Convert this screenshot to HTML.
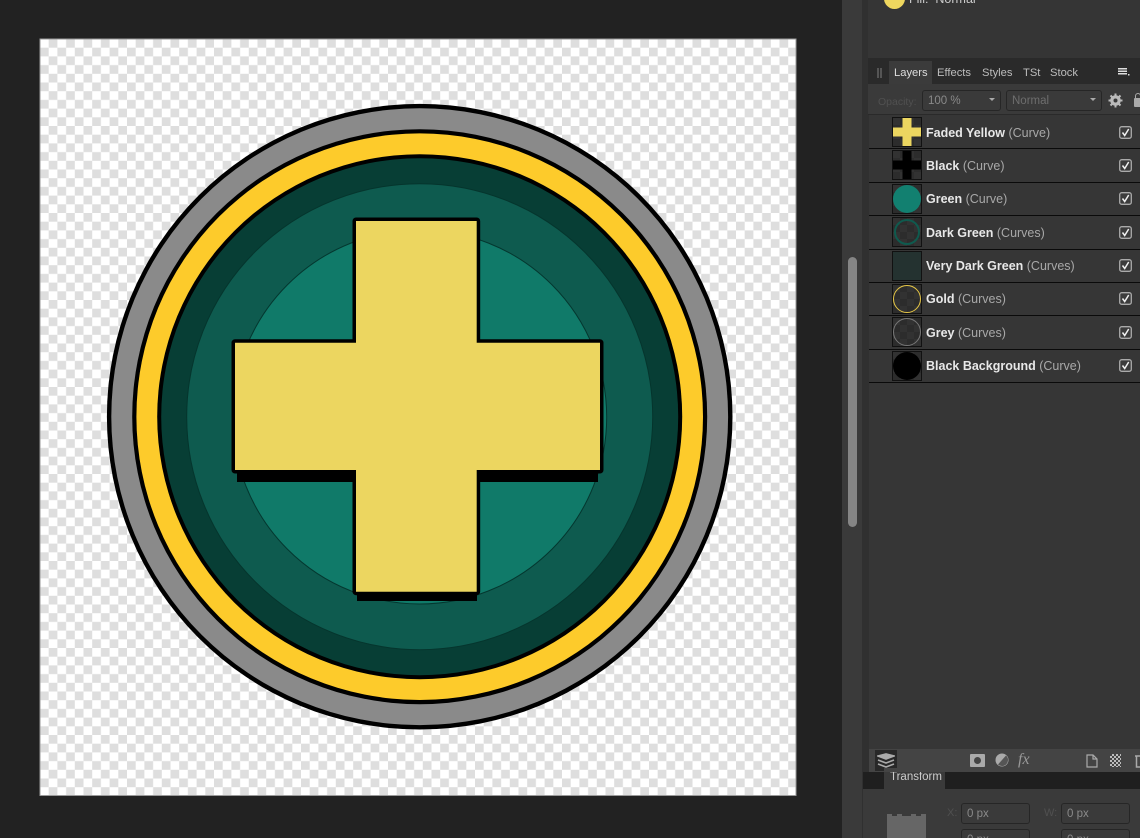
<!DOCTYPE html>
<html><head><meta charset="utf-8">
<style>
html,body{margin:0;padding:0;background:#222}
#r{position:relative;width:1140px;height:838px;overflow:hidden;background:#222;font-family:"Liberation Sans",sans-serif;color:#bbb;filter:blur(.35px)}
.a{position:absolute}
.row{position:absolute;left:869px;width:271px;border-bottom:1.5px solid #0a0a0a;background:#363636}
.th{position:absolute;left:23px;top:.5px;width:30px;height:30px;background:repeating-conic-gradient(#2c2c2c 0 25%,#323232 0 50%) 0 0/14px 14px;border:1px solid #111;box-sizing:border-box;overflow:hidden}
.t{position:absolute;left:57px;font-size:12.5px;line-height:15px;color:#a8a8a8;white-space:nowrap}
.t b{color:#e8e8e8}
.c{position:absolute;left:250px;width:13px;height:13px}
.tab{position:absolute;top:66px;font-size:11.2px;color:#bdbdbd;line-height:14px}
.fld{position:absolute;height:21px;width:69px;background:#3a3a3a;border:1px solid #262626;border-radius:3px;box-sizing:border-box;font-size:11.5px;line-height:21px;padding-left:5px;color:#8a8a8a}
</style></head><body>
<div id="r">
<svg class="a" style="left:0;top:0" width="840" height="838" viewBox="0 0 840 838">
<defs><pattern id="ck" x="40" y="39" width="17.4" height="17.4" patternUnits="userSpaceOnUse">
<rect width="17.4" height="17.4" fill="#fff"/><rect x="8.7" width="8.7" height="8.7" fill="#dedede"/><rect y="8.7" width="8.7" height="8.7" fill="#dedede"/></pattern></defs>
<rect x="40" y="39" width="756" height="756.500" fill="url(#ck)" stroke="#9a9a9a" stroke-width="1"/>
<circle cx="419.7" cy="416.7" r="312.800" fill="#000"/>
<circle cx="419.7" cy="416.7" r="308.400" fill="#8a8a8a"/>
<circle cx="419.7" cy="416.700" r="287.500" fill="#000"/>
<circle cx="419.7" cy="416.700" r="283.300" fill="#fdcb2b"/>
<circle cx="419.7" cy="416.700" r="262.500" fill="#000"/>
<circle cx="419.7" cy="416.700" r="258.500" fill="#073e35"/>
<circle cx="419.7" cy="416.700" r="233" fill="#0e5b4f" stroke="#05352d" stroke-width="1"/>
<circle cx="419.7" cy="417" r="187" fill="#107a69" stroke="#04372f" stroke-width="1"/>
<path d="M357 230H477V470H598V482H477V601H357V482H237V470H357Z" fill="#000"/>
<path d="M356 221H476.700V342.700H600V470H476.700V591.700H356V470H235V342.700H356Z" fill="#ecd660" stroke="#000" stroke-width="7" paint-order="stroke" stroke-linejoin="round"/>
</svg>

<div class="a" style="left:842px;top:0;width:298px;height:838px;background:#363636"></div>
<div class="a" style="left:842px;top:0;width:20px;height:838px;background:#3a3a3a"></div>
<div class="a" style="left:862px;top:0;width:7px;height:838px;background:#303030"></div>
<div class="a" style="left:848px;top:257px;width:9px;height:270px;border-radius:5px;background:#858585"></div>
<div class="a" style="left:868px;top:0;width:272px;height:58px;background:#353535"></div>
<div class="a" style="left:884px;top:-12px;width:21px;height:21px;border-radius:50%;background:#efd75f"></div>
<div class="a" style="left:909px;top:-8px;font-size:12.5px;line-height:14px;color:#ccc;white-space:nowrap">Fill:&nbsp;&nbsp;Normal</div>

<div class="a" style="left:868px;top:58px;width:272px;height:26px;background:#2a2a2a"></div>
<div class="a" style="left:889px;top:61px;width:43px;height:23px;background:#3b3b3b"></div>
<div class="a" style="left:877px;top:68px;width:1.5px;height:10px;background:#555;box-shadow:3px 0 0 #555"></div>
<div class="tab" style="left:894px;color:#ddd">Layers</div>
<div class="tab" style="left:937px">Effects</div>
<div class="tab" style="left:982px">Styles</div>
<div class="tab" style="left:1023px">TSt</div>
<div class="tab" style="left:1050px">Stock</div>
<svg class="a" style="left:1117px;top:67px" width="14" height="10" viewBox="0 0 14 10" fill="#ddd"><rect x="1" y="1" width="9" height="1.500"/><rect x="1" y="3.500" width="9" height="1.500"/><rect x="1" y="6" width="9" height="1.500"/><rect x="11" y="7" width="1.500" height="1.500"/></svg>
<div class="a" style="left:868px;top:84px;width:272px;height:31px;background:#3a3a3a;border-bottom:1px solid #2a2a2a;box-sizing:border-box"></div>
<div class="a" style="left:878px;top:96px;font-size:10.5px;line-height:13px;color:#505050">Opacity:</div>
<div class="fld" style="left:922px;top:90px;width:79px">100 %<span class="a" style="right:5px;top:7px;border:3px solid transparent;border-top:3px solid #aaa"></span></div>
<div class="fld" style="left:1006px;top:90px;width:96px;color:#6e6e6e">Normal<span class="a" style="right:5px;top:7px;border:3px solid transparent;border-top:3px solid #aaa"></span></div>
<svg class="a" style="left:1108px;top:93px" width="15" height="15" viewBox="0 0 15 15"><circle cx="7.5" cy="7.5" r="3.8" fill="none" stroke="#bbb" stroke-width="3"/><path d="M7.5 .5V14.500M.5 7.500H14.500M2.500 2.500L12.500 12.500M12.500 2.500L2.500 12.500" stroke="#bbb" stroke-width="2"/><circle cx="7.500" cy="7.500" r="2" fill="#3a3a3a"/></svg>
<div class="a" style="left:1134px;top:98px;width:8px;height:9px;background:#aaa;border-radius:1px"></div>
<div class="a" style="left:1135px;top:93px;width:6px;height:6px;border:1.500px solid #aaa;border-radius:4px 4px 0 0;box-sizing:border-box"></div>

<svg width="0" height="0" style="position:absolute"><defs><symbol id="k" viewBox="0 0 13 13"><rect x=".7" y=".7" width="11.600" height="11.600" rx="2" fill="#3c3c3c" stroke="#aaa" stroke-width="1.300"/><path d="M3.500 6.500L5.700 9.500L9.700 3" fill="none" stroke="#f0f0f0" stroke-width="1.500"/></symbol></defs></svg>

<div class="row" style="top:116px;height:32px"><div class="th"><svg width="28" height="28" style="position:absolute;left:0;top:0"><path d="M9.500 0H18.500V9.500H28V18.500H18.500V28H9.500V18.500H0V9.500H9.500Z" fill="#ecd660"/></svg></div><div class="t" style="top:9.500px"><b>Faded Yellow</b> (Curve)</div><svg class="c" style="top:9.500px"><use href="#k"/></svg></div>
<div class="row" style="top:149.500px;height:32.500px"><div class="th"><svg width="28" height="28" style="position:absolute;left:0;top:0"><path d="M9.500 0H18.500V9.500H28V18.500H18.500V28H9.500V18.500H0V9.500H9.500Z" fill="#000"/></svg></div><div class="t" style="top:9px"><b>Black</b> (Curve)</div><svg class="c" style="top:9px"><use href="#k"/></svg></div>
<div class="row" style="top:183.500px;height:31.500px"><div class="th"><div class="a" style="left:0;top:0;width:28px;height:28px;border-radius:50%;background:#128070"></div></div><div class="t" style="top:8.500px"><b>Green</b> (Curve)</div><svg class="c" style="top:8.500px"><use href="#k"/></svg></div>
<div class="row" style="top:216.500px;height:32px"><div class="th"><div class="a" style="left:1px;top:1px;width:26px;height:26px;box-sizing:border-box;border-radius:50%;border:2.500px solid #0f5a4e"></div></div><div class="t" style="top:9px"><b>Dark Green</b> (Curves)</div><svg class="c" style="top:9px"><use href="#k"/></svg></div>
<div class="row" style="top:250px;height:32px"><div class="th" style="background:#243230"></div><div class="t" style="top:9px"><b>Very Dark Green</b> (Curves)</div><svg class="c" style="top:9px"><use href="#k"/></svg></div>
<div class="row" style="top:283.500px;height:31.500px"><div class="th"><div class="a" style="left:0;top:0;width:28px;height:28px;box-sizing:border-box;border-radius:50%;border:1.500px solid #e6c645"></div></div><div class="t" style="top:8.500px"><b>Gold</b> (Curves)</div><svg class="c" style="top:8.500px"><use href="#k"/></svg></div>
<div class="row" style="top:316.500px;height:32.500px"><div class="th"><div class="a" style="left:0;top:0;width:28px;height:28px;box-sizing:border-box;border-radius:50%;border:1px solid #777"></div></div><div class="t" style="top:9px"><b>Grey</b> (Curves)</div><svg class="c" style="top:9px"><use href="#k"/></svg></div>
<div class="row" style="top:350.500px;height:31.500px"><div class="th"><div class="a" style="left:0;top:0;width:28px;height:28px;border-radius:50%;background:#000"></div></div><div class="t" style="top:8.500px"><b>Black Background</b> (Curve)</div><svg class="c" style="top:8.500px"><use href="#k"/></svg></div>

<div class="a" style="left:869px;top:749px;width:271px;height:23px;background:#444"></div>
<div class="a" style="left:875px;top:750px;width:22px;height:21px;background:#282828"></div>
<svg class="a" style="left:877px;top:753px" width="18" height="16" viewBox="0 0 18 16" fill="none" stroke="#aaa" stroke-width="1.600"><path d="M1 3L9 1L17 3L9 6Z" fill="#aaa"/><path d="M1 7L9 10L17 7M1 11L9 14L17 11"/></svg>
<div class="a" style="left:970px;top:754px;width:15px;height:13px;background:#aaa;border-radius:1px"></div>
<div class="a" style="left:974px;top:757px;width:7px;height:7px;border-radius:50%;background:#444"></div>
<svg class="a" style="left:995px;top:753px" width="14" height="14" viewBox="0 0 14 14"><circle cx="7" cy="7" r="6.500" fill="#aaa"/><path d="M11 2.500A6 6 0 0 1 3 11.500Z" fill="#555"/></svg>
<div class="a" style="left:1018px;top:750px;font:italic 16px/19px 'Liberation Serif',serif;color:#999">fx</div>
<svg class="a" style="left:1086px;top:754px" width="12" height="14" viewBox="0 0 12 14" fill="none" stroke="#aaa" stroke-width="1.200"><path d="M1 1H7L11 5V13H1ZM7 1V5H11"/></svg>
<div class="a" style="left:1110px;top:754px;width:11px;height:13px;background:repeating-conic-gradient(#bbb 0 25%,#444 0 50%) 0 0/4px 4px"></div>
<svg class="a" style="left:1135px;top:753px" width="7" height="15" viewBox="0 0 7 15" fill="none" stroke="#aaa" stroke-width="1.500"><path d="M0 3H7M1.500 3V14H7"/></svg>

<div class="a" style="left:863px;top:772px;width:277px;height:17px;background:#1f1f1f"></div>
<div class="a" style="left:884px;top:772px;width:61px;height:17px;background:#3a3a3a"></div>
<div class="a" style="left:890px;top:771px;font-size:11.500px;line-height:13px;color:#ccc">Transform</div>
<div class="a" style="left:884px;top:768px;width:61px;height:4px;background:#444"></div>
<div class="a" style="left:863px;top:789px;width:277px;height:49px;background:#3a3a3a"></div>
<svg class="a" style="left:887px;top:813px" width="39" height="25" viewBox="0 0 39 25"><path d="M0 1H5V3H10V1H15V3H24V1H29V3H34V1H39V25H0Z" fill="#666"/></svg>
<div class="a" style="left:947px;top:807px;font-size:11px;line-height:13px;color:#505050">X:</div>
<div class="a" style="left:1044px;top:807px;font-size:11px;line-height:13px;color:#505050">W:</div>
<div class="fld" style="left:961px;top:803px">0 px</div>
<div class="fld" style="left:1061px;top:803px">0 px</div>
<div class="fld" style="left:961px;top:829px">0 px</div>
<div class="fld" style="left:1061px;top:829px">0 px</div>
</div>
</body></html>
